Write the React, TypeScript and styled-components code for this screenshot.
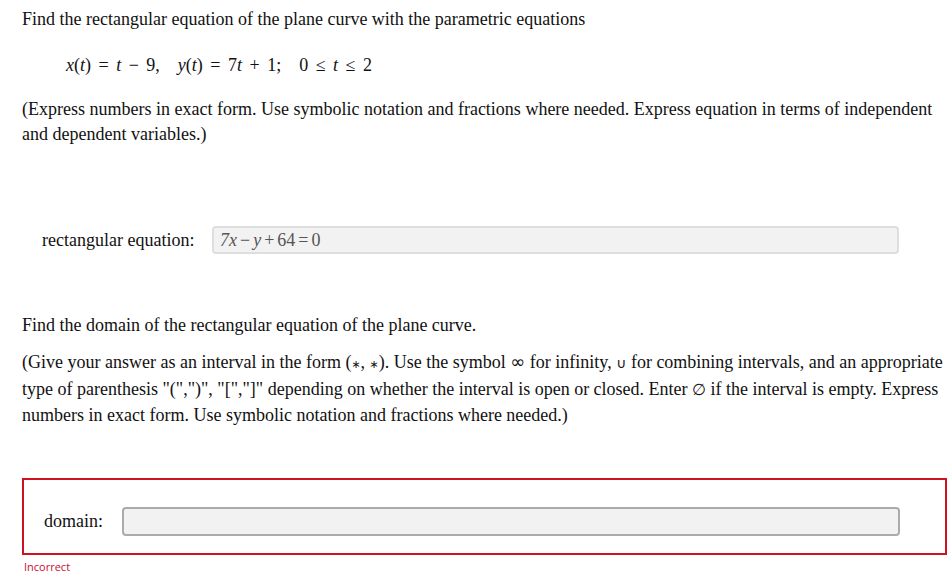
import React from 'react';
import styled, { createGlobalStyle } from 'styled-components';

const GlobalStyle = createGlobalStyle`
  html, body {
    margin: 0;
    padding: 0;
    background: #fff;
  }
  body {
    font-family: 'Liberation Serif', 'Times New Roman', serif;
    color: #111;
    font-size: 18px;
  }
`;

const Page = styled.div`
  padding: 7px 0 0 22px;
  width: 925px;
`;

const Para = styled.p<{ $top?: number; $lh?: number }>`
  margin: ${props => props.$top ?? 0}px 0 0;
  line-height: ${props => props.$lh ?? 25}px;
  font-size: 18px;
`;

const MathLine = styled.div`
  margin: 21px 0 0 44px;
  line-height: 25px;
  font-size: 18px;
  word-spacing: 3px;
`;

const V = styled.i`
  font-style: italic;
`;

const Sym = styled.span<{ $size: number }>`
  font-size: ${props => props.$size}px;
  font-family: 'DejaVu Sans', sans-serif;
  line-height: 0;
`;

const Gap = styled.span<{ $w: number }>`
  display: inline-block;
  width: ${props => props.$w}px;
`;

const AnswerRow = styled.div<{ $labelWidth: number }>`
  display: grid;
  grid-template-columns: ${props => props.$labelWidth}px 1fr;
  align-items: center;
  padding-left: 20px;
`;

const Label = styled.label`
  font-size: 18px;
`;

const AnswerBox = styled.div<{ $strong?: boolean }>`
  height: ${props => (props.$strong ? 25 : 24)}px;
  border: ${props => (props.$strong ? '2px solid #ababab' : '2px solid #dedede')};
  border-radius: 4px;
  background: #f2f2f2;
  padding: 0 6px;
  display: flex;
  align-items: center;
  color: #555;
  font-size: 18px;
`;

const FirstAnswer = styled.div`
  margin-top: 79px;
  width: 877px;
`;

const Feedback = styled.div`
  margin-top: 49px;
  width: 925px;
  box-sizing: border-box;
  border: 2px solid #d0111f;
  padding: 27px 0 17px 0;
`;

const DomainRow = styled.div`
  width: 876px;
`;

const Incorrect = styled.div`
  margin: 4px 0 0 2px;
  font-family: 'Open Sans', 'Liberation Sans', sans-serif;
  font-size: 11px;
  color: #c8102e;
`;

export default function App() {
  return (
    <Page>
      <GlobalStyle />
      <Para>Find the rectangular equation of the plane curve with the parametric equations</Para>
      <MathLine>
        <V>x</V>(<V>t</V>) = <V>t</V> − 9,<Gap $w={18} />
        <V>y</V>(<V>t</V>) = 7<V>t</V> + 1;<Gap $w={18} />
        0 ≤ <V>t</V> ≤ 2
      </MathLine>
      <Para $top={19}>
        (Express numbers in exact form. Use symbolic notation and fractions where needed. Express equation in terms of independent
        and dependent variables.)
      </Para>
      <FirstAnswer>
        <AnswerRow $labelWidth={170}>
          <Label>rectangular equation:</Label>
          <AnswerBox>
            <V>7x</V>
            <Gap $w={3} />−<Gap $w={3} />
            <V>y</V>
            <Gap $w={3} />+<Gap $w={3} />64<Gap $w={3} />=<Gap $w={3} />0
          </AnswerBox>
        </AnswerRow>
      </FirstAnswer>
      <Para $top={59}>Find the domain of the rectangular equation of the plane curve.</Para>
      <Para $top={11} $lh={26.5}>
        (Give your answer as an interval in the form (<Sym $size={11}>∗</Sym>, <Sym $size={11}>∗</Sym>). Use the symbol{' '}
        <Sym $size={18}>∞</Sym> for infinity, <Sym $size={14}>∪</Sym> for combining intervals, and an appropriate
        type of parenthesis "(",")", "[","]" depending on whether the interval is open or closed. Enter{' '}
        <Sym $size={16}>∅</Sym> if the interval is empty. Express
        numbers in exact form. Use symbolic notation and fractions where needed.)
      </Para>
      <Feedback>
        <DomainRow>
          <AnswerRow $labelWidth={78}>
            <Label>domain:</Label>
            <AnswerBox $strong />
          </AnswerRow>
        </DomainRow>
      </Feedback>
      <Incorrect>Incorrect</Incorrect>
    </Page>
  );
}
